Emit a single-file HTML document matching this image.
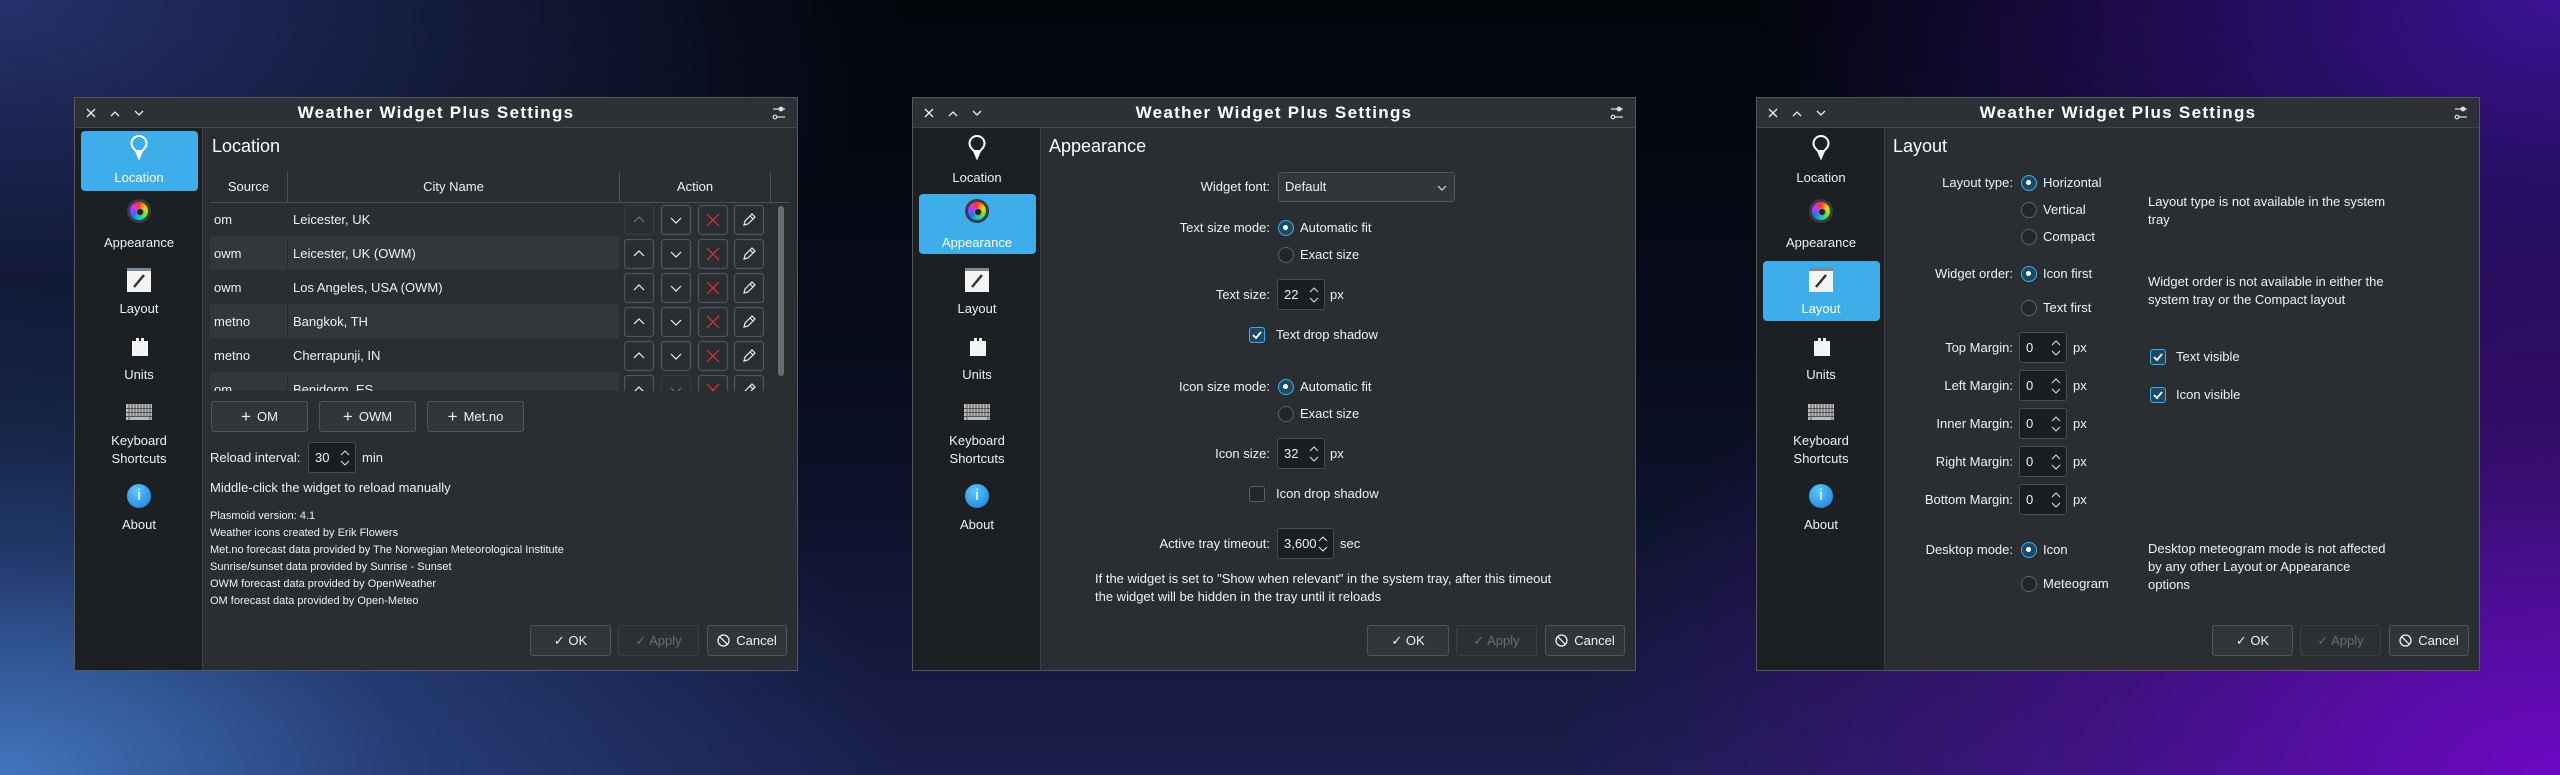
<!DOCTYPE html>
<html><head><meta charset="utf-8"><style>
*{box-sizing:border-box;margin:0;padding:0}
body{width:2560px;height:775px;overflow:hidden;font-family:"Liberation Sans",sans-serif;position:relative;
background:
radial-gradient(ellipse 900px 500px at 0% 100%,#4275bd 0%,rgba(50,90,160,.5) 45%,transparent 100%),
radial-gradient(ellipse 1000px 600px at 100% 100%,#6d08c4 0%,rgba(90,10,170,.6) 45%,transparent 100%),
radial-gradient(ellipse 800px 500px at 100% 0%,#3b1294 0%,transparent 100%),
radial-gradient(ellipse 900px 450px at 0% 0%,#25316c 0%,transparent 100%),
linear-gradient(#02050a 0%,#0a0f22 55%,#1a1f4c 100%);}
.win{position:absolute;top:97px;width:724px;height:574px;background:#2a2e32;border:1px solid #54585c;overflow:hidden}
.tb{position:absolute;left:0;top:0;width:100%;height:30px;background:#2d3135;border-bottom:1px solid #44484c}
.title{position:absolute;left:0;width:100%;top:6px;text-align:center;color:#fff;font-weight:bold;font-size:17px;letter-spacing:1.3px;line-height:18px}
.side{position:absolute;left:0;top:30px;width:128px;height:544px;background:#1d2023;border-right:1px solid #3c4044}
.sel{position:absolute;left:6px;width:117px;height:60px;background:#3daee9;border-radius:4px}
.sl{position:absolute;left:0;width:128px;text-align:center;color:#eff0f1;font-size:13px;line-height:16px}
.t{position:absolute;white-space:nowrap;color:#eff0f1;font-size:13px;line-height:16px}
.s{font-size:11px;line-height:14px}
.h{font-size:18px;line-height:22px;color:#fcfcfc}
.btn{position:absolute;background:#31363b;border:1px solid #4f5459;border-radius:3px;color:#eff0f1;font-size:13px;display:flex;align-items:center;justify-content:center;gap:6px}
.dis{color:#6a6e72;background:#2c3034;border-color:#3c4044}
.ab{position:absolute;width:29px;height:29px;background:#2a2e32;border:1px solid #50555a;border-radius:3px}
.spin{position:absolute;width:48px;height:31px;background:#1b1e20;border:1px solid #4a4e52;border-radius:3px;color:#eff0f1;font-size:13px;line-height:29px;padding-left:6px}
.spin svg{position:absolute;right:5px;top:6px}
.rad{position:absolute;width:16px;height:16px;border:1px solid #5d6165;border-radius:50%;background:#232629}
.rad.on{border:1.5px solid #3daee9;background:#1d4a62}
.rad.on::after{content:"";position:absolute;left:4px;top:4px;width:5px;height:5px;border-radius:50%;background:#fff}
.chk{position:absolute;width:16px;height:16px;border:1px solid #5d6165;border-radius:3px;background:#232629}
.chk.on{border:1.5px solid #3daee9;background:#1d4a62}
.ico{position:absolute;left:52px}
.wheel{position:absolute;left:52px;width:24px;height:24px;border-radius:50%;background:conic-gradient(#f33,#fc0,#6e3,#0cc,#36f,#c3f,#f33);border:3px solid #3a3d40}
.wheel::after{content:"";position:absolute;left:6px;top:6px;width:6px;height:6px;border-radius:50%;background:#222;border:1px solid #888}
.about{position:absolute;left:52px;width:24px;height:24px;border-radius:50%;background:radial-gradient(circle at 40% 30%,#5cc8ff,#1a78d8);color:#fff;font-size:16px;line-height:24px;text-align:center}
</style></head><body>

<!-- reusable sidebar markup via copies -->
<!-- WINDOW 1 -->
<div class="win" style="left:74px">
 <div class="tb">
  <svg width="80" height="30" style="position:absolute;left:0;top:0" stroke="#eee" stroke-width="1.3" fill="none"><path d="M12 11l8 8M20 11l-8 8"/><path d="M36 18l4-4 4 4"/><path d="M60 13l4 4 4-4"/></svg>
  <div class="title">Weather Widget Plus Settings</div>
  <svg width="16" height="16" style="position:absolute;right:10px;top:7px" stroke="#ddd" stroke-width="1.2" fill="none"><path d="M2 4h12M2 12h12"/><circle cx="10" cy="4" r="1.8" fill="#ddd"/><circle cx="4" cy="12" r="1.8" fill="#2d3135"/></svg>
 </div>
 <div class="side">
  <div class="sel" style="top:3px"></div>
  <svg class="ico" style="top:6px;left:54px" width="20" height="26"><path d="M10 2a7.5 7.5 0 0 0-7.5 7.5c0 3 2 5 4.5 7.5L10 24l3-7c2.5-2.5 4.5-4.5 4.5-7.5A7.5 7.5 0 0 0 10 2z" fill="none" stroke="#fff" stroke-width="2"/><path d="M6 16l4 8 4-8z" fill="#fff"/></svg>
  <div class="sl" style="top:42px;color:#fff">Location</div>
  <div class="wheel" style="top:71px"></div>
  <div class="sl" style="top:107px">Appearance</div>
  <svg class="ico" style="top:139px;left:51px" width="26" height="26"><rect x="1" y="1" width="24" height="24" fill="#f4f4f4"/><rect x="1" y="1" width="24" height="3" fill="#7a8a96"/><path d="M8 20l10-12" stroke="#333" stroke-width="2.5"/></svg>
  <div class="sl" style="top:173px">Layout</div>
  <svg class="ico" style="top:209px;left:56px" width="18" height="20"><path d="M1 4h4V1h3v3h2V1h3v3h4v15H1z" fill="#f4f4f4"/></svg>
  <div class="sl" style="top:239px">Units</div>
  <svg class="ico" style="top:276px;left:51px" width="26" height="16"><rect x="0" y="0" width="26" height="16" fill="#bbb"/><g stroke="#555" stroke-width="1"><path d="M0 4.5h26M0 8.5h26M0 12.5h26"/><path d="M3 0v16M6 0v12M9 0v12M12 0v12M15 0v12M18 0v12M21 0v12M24 0v16"/></g></svg>
  <div class="sl" style="top:305px">Keyboard</div>
  <div class="sl" style="top:323px">Shortcuts</div>
  <div class="about" style="top:356px">i</div>
  <div class="sl" style="top:389px">About</div>
 </div>
 <div class="t h" style="left:137px;top:37px">Location</div>
 <!-- table -->
 <div style="position:absolute;left:135px;top:104px;width:580px;height:189px;overflow:hidden">
  <div style="position:absolute;left:0;top:34px;width:409px;height:34px;background:#33373b"></div>
  <div style="position:absolute;left:0;top:102px;width:409px;height:34px;background:#33373b"></div>
  <div style="position:absolute;left:0;top:170px;width:409px;height:34px;background:#33373b"></div>
  <div style="position:absolute;left:77px;top:0;width:1px;height:204px;background:#2a2e32"></div>
 </div>
 <div style="position:absolute;left:135px;top:104px;width:580px;height:1px;background:#4d5155"></div>
 <div style="position:absolute;left:212px;top:74px;width:1px;height:30px;background:#4d5155"></div>
 <div style="position:absolute;left:544px;top:74px;width:1px;height:30px;background:#4d5155"></div>
 <div style="position:absolute;left:695px;top:74px;width:1px;height:30px;background:#4d5155"></div>
 <div class="t" style="left:135px;width:77px;text-align:center;top:81px">Source</div>
 <div class="t" style="left:213px;width:331px;text-align:center;top:81px">City Name</div>
 <div class="t" style="left:545px;width:150px;text-align:center;top:81px">Action</div>
 <div style="position:absolute;left:135px;top:105px;width:580px;height:188px;overflow:hidden">
  <div class="t" style="left:4px;top:9px">om</div><div class="t" style="left:83px;top:9px">Leicester, UK</div>
  <div class="t" style="left:4px;top:43px">owm</div><div class="t" style="left:83px;top:43px">Leicester, UK (OWM)</div>
  <div class="t" style="left:4px;top:77px">owm</div><div class="t" style="left:83px;top:77px">Los Angeles, USA (OWM)</div>
  <div class="t" style="left:4px;top:111px">metno</div><div class="t" style="left:83px;top:111px">Bangkok, TH</div>
  <div class="t" style="left:4px;top:145px">metno</div><div class="t" style="left:83px;top:145px">Cherrapunji, IN</div>
  <div class="t" style="left:4px;top:179px">om</div><div class="t" style="left:83px;top:179px">Benidorm, ES</div>
  <svg width="160" height="188" style="position:absolute;left:413px;top:0" fill="none" stroke-width="1.2">
   <defs>
    <g id="up"><rect x=".5" y=".5" width="29" height="29" rx="3" fill="#2a2e32" stroke="#50555a"/><path d="M10 17l5-5 5 5" stroke="#eee"/></g>
    <g id="dn"><rect x=".5" y=".5" width="29" height="29" rx="3" fill="#2a2e32" stroke="#50555a"/><path d="M10 13l5 5 5-5" stroke="#eee"/></g>
    <g id="x"><rect x=".5" y=".5" width="29" height="29" rx="3" fill="#2a2e32" stroke="#50555a"/><path d="M9 9l12 12M21 9l-12 12" stroke="#e0303a"/></g>
    <g id="ed"><rect x=".5" y=".5" width="29" height="29" rx="3" fill="#2a2e32" stroke="#50555a"/><path d="M10 20l1-4 7-7 3 3-7 7zM16 11l3 3" stroke="#eee"/></g>
   </defs>
   <g transform="translate(1,2)"><g opacity=".35"><use href="#up"/></g><use href="#dn" x="37"/><use href="#x" x="74"/><use href="#ed" x="110"/></g>
   <g transform="translate(1,36)"><use href="#up"/><use href="#dn" x="37"/><use href="#x" x="74"/><use href="#ed" x="110"/></g>
   <g transform="translate(1,70)"><use href="#up"/><use href="#dn" x="37"/><use href="#x" x="74"/><use href="#ed" x="110"/></g>
   <g transform="translate(1,104)"><use href="#up"/><use href="#dn" x="37"/><use href="#x" x="74"/><use href="#ed" x="110"/></g>
   <g transform="translate(1,138)"><use href="#up"/><use href="#dn" x="37"/><use href="#x" x="74"/><use href="#ed" x="110"/></g>
   <g transform="translate(1,172)"><use href="#up"/><g opacity=".35"><use href="#dn" x="37"/></g><use href="#x" x="74"/><use href="#ed" x="110"/></g>
  </svg>
  <div style="position:absolute;left:568px;top:3px;width:6px;height:170px;border-radius:3px;background:#6a6e72"></div>
 </div>
 <div class="btn" style="left:136px;top:303px;width:97px;height:31px"><span style="font-size:17px">+</span>OM</div>
 <div class="btn" style="left:244px;top:303px;width:97px;height:31px"><span style="font-size:17px">+</span>OWM</div>
 <div class="btn" style="left:352px;top:303px;width:97px;height:31px"><span style="font-size:17px">+</span>Met.no</div>
 <div class="t" style="left:135px;top:352px">Reload interval:</div>
 <div class="spin" style="left:233px;top:344px">30<svg width="10" height="18" fill="none" stroke="#ddd" stroke-width="1.1"><path d="M1 6l4-4 4 4M1 12l4 4 4-4"/></svg></div>
 <div class="t" style="left:287px;top:352px">min</div>
 <div class="t" style="left:135px;top:382px">Middle-click the widget to reload manually</div>
 <div class="t s" style="left:135px;top:411px">Plasmoid version: 4.1</div>
 <div class="t s" style="left:135px;top:428px">Weather icons created by Erik Flowers</div>
 <div class="t s" style="left:135px;top:445px">Met.no forecast data provided by The Norwegian Meteorological Institute</div>
 <div class="t s" style="left:135px;top:462px">Sunrise/sunset data provided by Sunrise - Sunset</div>
 <div class="t s" style="left:135px;top:479px">OWM forecast data provided by OpenWeather</div>
 <div class="t s" style="left:135px;top:496px">OM forecast data provided by Open-Meteo</div>
 <div class="btn" style="left:455px;top:527px;width:81px;height:31px">✓ OK</div>
 <div class="btn dis" style="left:543px;top:527px;width:81px;height:31px">✓ Apply</div>
 <div class="btn" style="left:632px;top:527px;width:80px;height:31px"><svg width="13" height="13" fill="none" stroke="#eee" stroke-width="1.3"><circle cx="6.5" cy="6.5" r="5.5"/><path d="M2.8 2.8l7.4 7.4"/></svg>Cancel</div>
</div>

<!-- WINDOW 2 -->
<div class="win" style="left:912px">
 <div class="tb">
  <svg width="80" height="30" style="position:absolute;left:0;top:0" stroke="#eee" stroke-width="1.3" fill="none"><path d="M12 11l8 8M20 11l-8 8"/><path d="M36 18l4-4 4 4"/><path d="M60 13l4 4 4-4"/></svg>
  <div class="title">Weather Widget Plus Settings</div>
  <svg width="16" height="16" style="position:absolute;right:10px;top:7px" stroke="#ddd" stroke-width="1.2" fill="none"><path d="M2 4h12M2 12h12"/><circle cx="10" cy="4" r="1.8" fill="#ddd"/><circle cx="4" cy="12" r="1.8" fill="#2d3135"/></svg>
 </div>
 <div class="side">
  <div class="sel" style="top:66px"></div>
  <svg class="ico" style="top:6px;left:54px" width="20" height="26"><path d="M10 2a7.5 7.5 0 0 0-7.5 7.5c0 3 2 5 4.5 7.5L10 24l3-7c2.5-2.5 4.5-4.5 4.5-7.5A7.5 7.5 0 0 0 10 2z" fill="none" stroke="#fff" stroke-width="2"/><path d="M6 16l4 8 4-8z" fill="#fff"/></svg>
  <div class="sl" style="top:42px">Location</div>
  <div class="wheel" style="top:71px"></div>
  <div class="sl" style="top:107px;color:#fff">Appearance</div>
  <svg class="ico" style="top:139px;left:51px" width="26" height="26"><rect x="1" y="1" width="24" height="24" fill="#f4f4f4"/><rect x="1" y="1" width="24" height="3" fill="#7a8a96"/><path d="M8 20l10-12" stroke="#333" stroke-width="2.5"/></svg>
  <div class="sl" style="top:173px">Layout</div>
  <svg class="ico" style="top:209px;left:56px" width="18" height="20"><path d="M1 4h4V1h3v3h2V1h3v3h4v15H1z" fill="#f4f4f4"/></svg>
  <div class="sl" style="top:239px">Units</div>
  <svg class="ico" style="top:276px;left:51px" width="26" height="16"><rect x="0" y="0" width="26" height="16" fill="#bbb"/><g stroke="#555" stroke-width="1"><path d="M0 4.5h26M0 8.5h26M0 12.5h26"/><path d="M3 0v16M6 0v12M9 0v12M12 0v12M15 0v12M18 0v12M21 0v12M24 0v16"/></g></svg>
  <div class="sl" style="top:305px">Keyboard</div>
  <div class="sl" style="top:323px">Shortcuts</div>
  <div class="about" style="top:356px">i</div>
  <div class="sl" style="top:389px">About</div>
 </div>
 <div class="t h" style="left:136px;top:37px">Appearance</div>
 <div class="t" style="right:365px;top:81px">Widget font:</div>
 <div style="position:absolute;left:365px;top:74px;width:177px;height:30px;background:#31363b;border:1px solid #50555a;border-radius:3px"><div class="t" style="left:6px;top:6px">Default</div><svg width="10" height="8" style="position:absolute;right:7px;top:11px" fill="none" stroke="#ddd" stroke-width="1.2"><path d="M1 2l4 4 4-4"/></svg></div>
 <div class="t" style="right:365px;top:122px">Text size mode:</div>
 <div class="rad on" style="left:365px;top:122px"></div><div class="t" style="left:387px;top:122px">Automatic fit</div>
 <div class="rad" style="left:365px;top:149px"></div><div class="t" style="left:387px;top:149px">Exact size</div>
 <div class="t" style="right:365px;top:189px">Text size:</div>
 <div class="spin" style="left:364px;top:181px">22<svg width="10" height="18" fill="none" stroke="#ddd" stroke-width="1.1"><path d="M1 6l4-4 4 4M1 12l4 4 4-4"/></svg></div>
 <div class="t" style="left:417px;top:189px">px</div>
 <div class="chk on" style="left:336px;top:229px"><svg width="14" height="14" style="position:absolute;left:0;top:0" fill="none" stroke="#fff" stroke-width="1.8"><path d="M3 7l3 3 5-6"/></svg></div>
 <div class="t" style="left:363px;top:229px">Text drop shadow</div>
 <div class="t" style="right:365px;top:281px">Icon size mode:</div>
 <div class="rad on" style="left:365px;top:281px"></div><div class="t" style="left:387px;top:281px">Automatic fit</div>
 <div class="rad" style="left:365px;top:308px"></div><div class="t" style="left:387px;top:308px">Exact size</div>
 <div class="t" style="right:365px;top:348px">Icon size:</div>
 <div class="spin" style="left:364px;top:340px">32<svg width="10" height="18" fill="none" stroke="#ddd" stroke-width="1.1"><path d="M1 6l4-4 4 4M1 12l4 4 4-4"/></svg></div>
 <div class="t" style="left:417px;top:348px">px</div>
 <div class="chk" style="left:336px;top:388px"></div>
 <div class="t" style="left:363px;top:388px">Icon drop shadow</div>
 <div class="t" style="right:365px;top:438px">Active tray timeout:</div>
 <div class="spin" style="left:364px;top:430px;width:57px">3,600<svg width="10" height="18" fill="none" stroke="#ddd" stroke-width="1.1"><path d="M1 6l4-4 4 4M1 12l4 4 4-4"/></svg></div>
 <div class="t" style="left:427px;top:438px">sec</div>
 <div class="t" style="left:182px;top:473px">If the widget is set to "Show when relevant" in the system tray, after this timeout</div>
 <div class="t" style="left:182px;top:491px">the widget will be hidden in the tray until it reloads</div>
 <div class="btn" style="left:454px;top:527px;width:82px;height:31px">✓ OK</div>
 <div class="btn dis" style="left:543px;top:527px;width:81px;height:31px">✓ Apply</div>
 <div class="btn" style="left:632px;top:527px;width:80px;height:31px"><svg width="13" height="13" fill="none" stroke="#eee" stroke-width="1.3"><circle cx="6.5" cy="6.5" r="5.5"/><path d="M2.8 2.8l7.4 7.4"/></svg>Cancel</div>
</div>

<!-- WINDOW 3 -->
<div class="win" style="left:1756px">
 <div class="tb">
  <svg width="80" height="30" style="position:absolute;left:0;top:0" stroke="#eee" stroke-width="1.3" fill="none"><path d="M12 11l8 8M20 11l-8 8"/><path d="M36 18l4-4 4 4"/><path d="M60 13l4 4 4-4"/></svg>
  <div class="title">Weather Widget Plus Settings</div>
  <svg width="16" height="16" style="position:absolute;right:10px;top:7px" stroke="#ddd" stroke-width="1.2" fill="none"><path d="M2 4h12M2 12h12"/><circle cx="10" cy="4" r="1.8" fill="#ddd"/><circle cx="4" cy="12" r="1.8" fill="#2d3135"/></svg>
 </div>
 <div class="side">
  <div class="sel" style="top:133px"></div>
  <svg class="ico" style="top:6px;left:54px" width="20" height="26"><path d="M10 2a7.5 7.5 0 0 0-7.5 7.5c0 3 2 5 4.5 7.5L10 24l3-7c2.5-2.5 4.5-4.5 4.5-7.5A7.5 7.5 0 0 0 10 2z" fill="none" stroke="#fff" stroke-width="2"/><path d="M6 16l4 8 4-8z" fill="#fff"/></svg>
  <div class="sl" style="top:42px">Location</div>
  <div class="wheel" style="top:71px"></div>
  <div class="sl" style="top:107px">Appearance</div>
  <svg class="ico" style="top:139px;left:51px" width="26" height="26"><rect x="1" y="1" width="24" height="24" fill="#f4f4f4"/><rect x="1" y="1" width="24" height="3" fill="#7a8a96"/><path d="M8 20l10-12" stroke="#333" stroke-width="2.5"/></svg>
  <div class="sl" style="top:173px;color:#fff">Layout</div>
  <svg class="ico" style="top:209px;left:56px" width="18" height="20"><path d="M1 4h4V1h3v3h2V1h3v3h4v15H1z" fill="#f4f4f4"/></svg>
  <div class="sl" style="top:239px">Units</div>
  <svg class="ico" style="top:276px;left:51px" width="26" height="16"><rect x="0" y="0" width="26" height="16" fill="#bbb"/><g stroke="#555" stroke-width="1"><path d="M0 4.5h26M0 8.5h26M0 12.5h26"/><path d="M3 0v16M6 0v12M9 0v12M12 0v12M15 0v12M18 0v12M21 0v12M24 0v16"/></g></svg>
  <div class="sl" style="top:305px">Keyboard</div>
  <div class="sl" style="top:323px">Shortcuts</div>
  <div class="about" style="top:356px">i</div>
  <div class="sl" style="top:389px">About</div>
 </div>
 <div class="t h" style="left:136px;top:37px">Layout</div>
 <div class="t" style="right:466px;top:77px">Layout type:</div>
 <div class="rad on" style="left:264px;top:77px"></div><div class="t" style="left:286px;top:77px">Horizontal</div>
 <div class="rad" style="left:264px;top:104px"></div><div class="t" style="left:286px;top:104px">Vertical</div>
 <div class="rad" style="left:264px;top:131px"></div><div class="t" style="left:286px;top:131px">Compact</div>
 <div class="t" style="left:391px;top:96px">Layout type is not available in the system</div>
 <div class="t" style="left:391px;top:114px">tray</div>
 <div class="t" style="right:466px;top:168px">Widget order:</div>
 <div class="rad on" style="left:264px;top:168px"></div><div class="t" style="left:286px;top:168px">Icon first</div>
 <div class="rad" style="left:264px;top:202px"></div><div class="t" style="left:286px;top:202px">Text first</div>
 <div class="t" style="left:391px;top:176px">Widget order is not available in either the</div>
 <div class="t" style="left:391px;top:194px">system tray or the Compact layout</div>
 <div class="t" style="right:466px;top:242px">Top Margin:</div>
 <div class="spin" style="left:262px;top:234px">0<svg width="10" height="18" fill="none" stroke="#ddd" stroke-width="1.1"><path d="M1 6l4-4 4 4M1 12l4 4 4-4"/></svg></div><div class="t" style="left:316px;top:242px">px</div>
 <div class="t" style="right:466px;top:280px">Left Margin:</div>
 <div class="spin" style="left:262px;top:272px">0<svg width="10" height="18" fill="none" stroke="#ddd" stroke-width="1.1"><path d="M1 6l4-4 4 4M1 12l4 4 4-4"/></svg></div><div class="t" style="left:316px;top:280px">px</div>
 <div class="t" style="right:466px;top:318px">Inner Margin:</div>
 <div class="spin" style="left:262px;top:310px">0<svg width="10" height="18" fill="none" stroke="#ddd" stroke-width="1.1"><path d="M1 6l4-4 4 4M1 12l4 4 4-4"/></svg></div><div class="t" style="left:316px;top:318px">px</div>
 <div class="t" style="right:466px;top:356px">Right Margin:</div>
 <div class="spin" style="left:262px;top:348px">0<svg width="10" height="18" fill="none" stroke="#ddd" stroke-width="1.1"><path d="M1 6l4-4 4 4M1 12l4 4 4-4"/></svg></div><div class="t" style="left:316px;top:356px">px</div>
 <div class="t" style="right:466px;top:394px">Bottom Margin:</div>
 <div class="spin" style="left:262px;top:386px">0<svg width="10" height="18" fill="none" stroke="#ddd" stroke-width="1.1"><path d="M1 6l4-4 4 4M1 12l4 4 4-4"/></svg></div><div class="t" style="left:316px;top:394px">px</div>
 <div class="chk on" style="left:393px;top:251px"><svg width="14" height="14" style="position:absolute;left:0;top:0" fill="none" stroke="#fff" stroke-width="1.8"><path d="M3 7l3 3 5-6"/></svg></div>
 <div class="t" style="left:419px;top:251px">Text visible</div>
 <div class="chk on" style="left:393px;top:289px"><svg width="14" height="14" style="position:absolute;left:0;top:0" fill="none" stroke="#fff" stroke-width="1.8"><path d="M3 7l3 3 5-6"/></svg></div>
 <div class="t" style="left:419px;top:289px">Icon visible</div>
 <div class="t" style="right:466px;top:444px">Desktop mode:</div>
 <div class="rad on" style="left:264px;top:444px"></div><div class="t" style="left:286px;top:444px">Icon</div>
 <div class="rad" style="left:264px;top:478px"></div><div class="t" style="left:286px;top:478px">Meteogram</div>
 <div class="t" style="left:391px;top:443px">Desktop meteogram mode is not affected</div>
 <div class="t" style="left:391px;top:461px">by any other Layout or Appearance</div>
 <div class="t" style="left:391px;top:479px">options</div>
 <div class="btn" style="left:455px;top:527px;width:81px;height:31px">✓ OK</div>
 <div class="btn dis" style="left:543px;top:527px;width:81px;height:31px">✓ Apply</div>
 <div class="btn" style="left:632px;top:527px;width:80px;height:31px"><svg width="13" height="13" fill="none" stroke="#eee" stroke-width="1.3"><circle cx="6.5" cy="6.5" r="5.5"/><path d="M2.8 2.8l7.4 7.4"/></svg>Cancel</div>
</div>
</body></html>
